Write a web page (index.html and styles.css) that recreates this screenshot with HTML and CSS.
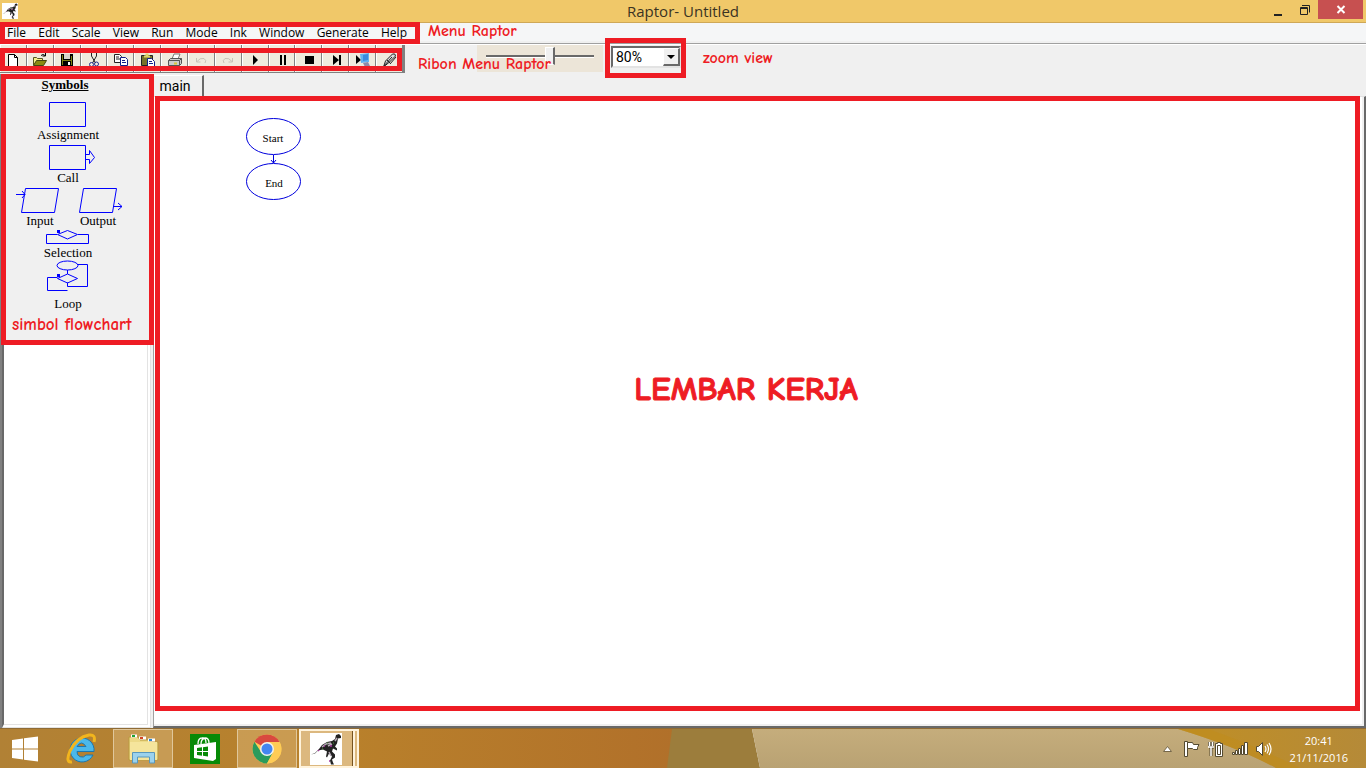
FILE: index.html
```html
<!DOCTYPE html>
<html lang="id">
<head>
    <meta charset="UTF-8">
    <meta name="viewport" content="width=device-width, initial-scale=1.0">
    <title>Raptor- Untitled</title>
    <link rel="stylesheet" href="styles.css">
</head>
<body>
    <svg class="defs" width="0" height="0" aria-hidden="true">
        <symbol id="dino" viewBox="0 0 32 32">
            <rect width="32" height="32" fill="#fff"/>
            <path d="M1 21.500l4-1.500 4-4 3-4 5-3 5-1 3-2 1-4 3-1 2 2v2l-3 .5-1 5-2 3 2 2v2l-2-1-2-1-1 3 3 3 0 3-3 2 1 3 1 2-3 0-1-4 2-4-3-3-2 4-1-1 1-5-4-2-5 1-3 3z" fill="#222"/>
            <path d="M12 14l4-3 5-1M18 13l4-2M19 19l2 4M25 8l2-3" stroke="#b5a9b5" stroke-width="1.500" fill="none"/>
            <path d="M8 18l1-1M14 13h1M21 12v2M19 28h1" stroke="#a3339a" stroke-width="1.500"/>
            <path d="M12 16h1M17 10h1M23 10h1" stroke="#4a9a3a" stroke-width="1"/>
        </symbol>
    </svg>

    <header class="titlebar">
        <svg class="app-icon" width="16" height="16"><use href="#dino"/></svg>
        <h1>Raptor- Untitled</h1>
        <div class="window-buttons">
            <button aria-label="Minimize"><svg width="10" height="12"><path d="M1 10h8v2H1z" fill="#222"/></svg></button>
            <button aria-label="Restore"><svg width="10" height="10"><path d="M.5 2.500h7v7h-7zM0 3.500h8M2 .5h7.500v7" fill="none" stroke="#222"/></svg></button>
            <button class="close" aria-label="Close"><svg width="8" height="7"><path d="M.5 0l7 7M7.500 0l-7 7" stroke="#fff" stroke-width="2"/></svg></button>
        </div>
    </header>

    <nav class="menubar">
        <div class="menu">
            <button>File</button>
            <button>Edit</button>
            <button>Scale</button>
            <button>View</button>
            <button>Run</button>
            <button>Mode</button>
            <button>Ink</button>
            <button>Window</button>
            <button>Generate</button>
            <button>Help</button>
            <span class="frame"></span>
        </div>
        <span class="note">Menu Raptor</span>
    </nav>

    <div class="toolbar">
        <div class="tools">
            <button aria-label="New"><svg width="16" height="16"><path d="M3.500 2.500h6l3 3v9h-9z" fill="#fff" stroke="#000"/><path d="M9.500 2.500v3h3" fill="none" stroke="#000"/></svg></button>
            <button aria-label="Open"><svg width="16" height="16"><path d="M1.500 13V5.500h3l1 1h5V9" fill="#f5f08a" stroke="#555520"/><path d="M1.500 13.500l3-5h10l-3 5z" fill="#8a8a10" stroke="#444410"/><path d="M9 3.500q2-2 4 0M13.500 1v3h-3" fill="none" stroke="#000"/></svg></button>
            <button aria-label="Save"><svg width="16" height="16"><path d="M2 2h12v12H2z" fill="#000"/><path d="M3 3h1v10H3zM12 4h1v9h-1zM4 8h8v1H4z" fill="#808010"/><path d="M5 2h6v5H5z" fill="#d8d4cc"/><path d="M9 10h2v3H9z" fill="#fff"/></svg></button>
            <button aria-label="Cut"><svg width="16" height="16"><path d="M5.500 1v3l4 7M10.500 1v3l-4 7" stroke="#222" fill="none"/><circle cx="5.500" cy="12.500" r="2" fill="none" stroke="#22308c"/><circle cx="10.500" cy="12" r="2" fill="none" stroke="#22308c"/></svg></button>
            <button aria-label="Copy"><svg width="16" height="16"><path d="M1.500 2.500h5l2 2v6h-7z" fill="#fff" stroke="#222"/><path d="M3 5h3M3 7h4" stroke="#222"/><path d="M7.500 5.500h5l2 2v6h-7z" fill="#fff" stroke="#10208a"/><path d="M9 8.500h3M9 10.500h4" stroke="#10208a"/></svg></button>
            <button aria-label="Paste"><svg width="16" height="16"><path d="M1.500 3.500h11v10h-11z" fill="#77732a" stroke="#222"/><path d="M4 4.500h6M5.500 2.500h3" stroke="#ddd66a" stroke-width="2"/><path d="M7.500 6.500h4l3 3v5h-7z" fill="#fff" stroke="#10208a"/><path d="M9 9.500h3M9 11.500h4" stroke="#10208a"/></svg></button>
            <button aria-label="Print"><svg width="16" height="16"><path d="M5 7l2-5h6l-2 5" fill="#fff" stroke="#777"/><path d="M1.500 8.500l2-2h11v5l-2 2h-11z" fill="#ccc" stroke="#555"/><path d="M1.500 8.500h11v5M12.500 8.500l2-2" fill="none" stroke="#555"/><path d="M7 11.500h3" stroke="#d7c73a" stroke-width="2"/></svg></button>
            <button aria-label="Undo"><svg width="16" height="16"><path d="M3.500 6v4h4M4 9.500q3-4 7-3 3 2 1 4.500" fill="none" stroke="#c8c3b8"/></svg></button>
            <button aria-label="Redo"><svg width="16" height="16"><path d="M12.500 6v4h-4M12 9.500q-3-4-7-3-3 2-1 4.500" fill="none" stroke="#c8c3b8"/></svg></button>
            <button aria-label="Run"><svg width="16" height="16"><path d="M6 3l5 5-5 5z"/></svg></button>
            <button aria-label="Pause"><svg width="16" height="16"><path d="M6 3h2v10H6zM10 3h2v10h-2z"/></svg></button>
            <button aria-label="Stop"><svg width="16" height="16"><path d="M4 4h9v8H4z"/></svg></button>
            <button aria-label="Step"><svg width="16" height="16"><path d="M5 3l6 5-6 5zM11 3h2v10h-2z"/></svg></button>
            <button aria-label="Test against server"><svg width="16" height="16"><path d="M1 3l5 5-5 4z"/><path d="M5 2l9-1v9l-8 1z" fill="#62b2f0"/><path d="M8 3l5-1v6l-5 1z" fill="#3a8ae0"/><path d="M8 11l5-1 2 4-5 1z" fill="#8d8aa8"/></svg></button>
            <button aria-label="Ink"><svg width="16" height="16"><path d="M2.500 15l2-6 7-7q3-1 3 2l-6 6z" fill="#ddd" stroke="#222"/><path d="M2 15l9-10M6 8l3 3M9 12l6-7" stroke="#222"/></svg></button>
            <span class="frame"></span>
        </div>
        <input class="speed" type="range" min="0" max="100" value="60" aria-label="Speed">
        <span class="note ribbon-note">Ribon Menu Raptor</span>
        <div class="zoom">
            <select aria-label="Zoom">
                <option>80%</option>
                <option>100%</option>
            </select>
            <span class="arrow"><svg width="8" height="4"><path d="M0 0h8L4 4z"/></svg></span>
            <span class="frame"></span>
        </div>
        <span class="note">zoom view</span>
    </div>

    <main class="workspace">
        <aside class="sidebar">
            <div class="symbols">
                <h2>Symbols</h2>
                <figure>
                    <svg width="38" height="25"><path d="M.5.5h36v24H.5z"/></svg>
                    <figcaption>Assignment</figcaption>
                </figure>
                <figure>
                    <svg width="38" height="25"><path d="M.5.5h36v24H.5zM37 9.500h3.500v-4l5 7-5 6v-4H37"/></svg>
                    <figcaption>Call</figcaption>
                </figure>
                <div class="pair">
                    <figure>
                        <svg width="38" height="25"><path d="M4.500.5h33l-4 24H.5zM-5 6.500h9M1 3l3 3.500L1 10"/></svg>
                        <figcaption>Input</figcaption>
                    </figure>
                    <figure>
                        <svg width="38" height="25"><path d="M4.500.5h33l-4 24H.5zM35 18.500h8M39 15l4 3.500-4 3.500"/></svg>
                        <figcaption>Output</figcaption>
                    </figure>
                </div>
                <figure class="selection">
                    <svg width="44" height="16"><path d="M11 5.500H.5v9h42v-9H32M11.500 5.500l10-4 10 4-10 4.500z"/><path class="dot" d="M11 1h3v3h-3z"/></svg>
                    <figcaption>Selection</figcaption>
                </figure>
                <figure class="loop">
                    <svg width="42" height="32"><ellipse cx="20.500" cy="5.500" rx="10.500" ry="4.500"/><path d="M31 4.500h9.500v22h-20v-4M20.500 10v4l10 4.500-10 4.500-10-4.500 10-4.500M10.500 17.500H.5v13h20"/><path class="dot" d="M10 14h3v3h-3z"/></svg>
                    <figcaption>Loop</figcaption>
                </figure>
                <span class="note">simbol flowchart</span>
                <span class="frame"></span>
            </div>
            <div class="watch"></div>
        </aside>

        <section class="editor">
            <div class="tabs"><button>main</button></div>
            <div class="sheet">
                <svg class="chart" width="57" height="84">
                    <ellipse cx="28.500" cy="19.500" rx="27" ry="18"/>
                    <path d="M28.500 38v8M26 43l2.500 3 2.500-3"/>
                    <ellipse cx="28.500" cy="64.500" rx="27" ry="18"/>
                    <text x="28" y="25">Start</text>
                    <text x="29" y="70">End</text>
                </svg>
                <p class="note sheet-note">LEMBAR KERJA</p>
                <span class="frame"></span>
            </div>
        </section>
    </main>

    <footer class="taskbar">
        <svg class="wallpaper" viewBox="0 0 1366 40" preserveAspectRatio="none">
            <defs>
                <linearGradient id="wood"><stop offset="0" stop-color="#b18135"/><stop offset=".5" stop-color="#b9812b"/><stop offset="1" stop-color="#b1702a"/></linearGradient>
                <linearGradient id="sand" x2="0" y2="1"><stop offset="0" stop-color="#c5ad7c"/><stop offset="1" stop-color="#b9a273"/></linearGradient>
                <linearGradient id="gold"><stop offset="0" stop-color="#c08f25"/><stop offset="1" stop-color="#b58a38"/></linearGradient>
            </defs>
            <path d="M0 0h675v40H0z" fill="url(#wood)"/>
            <path d="M672 0h80l8 40h-93z" fill="#9c7d3c"/>
            <path d="M752 0h614v40H760z" fill="url(#sand)"/>
            <path d="M1178 0h188v40h-90q-40-22-98-40z" fill="url(#gold)"/>
            <path d="M1178 0h30q50 18 92 40h-24q-40-22-98-40z" fill="#c08c1c" opacity=".6"/>
        </svg>
        <div class="apps">
            <button class="start" aria-label="Start"><svg width="28" height="26"><path d="M1 4l11-1.500V12.500H1zM13 2.300L27 .5v12H13zM1 13.500h11v10L1 22zM13 13.500h14V25.500l-14-1.800z" fill="#fff"/></svg></button>
            <button aria-label="Internet Explorer">
                <svg width="32" height="32"><path d="M29 18.500A12 12 0 1 0 28 22h-7a5 5 0 0 1-9-3.500zM12 13.500q4.500-7 9 0z" fill="#4bb8ea" stroke="#1d77ae" fill-rule="evenodd"/><path d="M7 29q-7 1-2-11Q12 4 24 2q7-1 5 7" fill="none" stroke="#f2b51d" stroke-width="3"/></svg>
            </button>
            <button class="open" aria-label="File Explorer">
                <svg width="32" height="30"><path d="M2 3h9l2 3h8l2 2h8v18H2z" fill="#edda87" stroke="#b99b3e"/><path d="M3 8h27v18H3z" fill="#f5e59c"/><path d="M4 2h6M12 4h7M21 6h7" stroke="#fff" stroke-width="3"/><path d="M5 2h3" stroke="#1ba335" stroke-width="2"/><path d="M13 4h3" stroke="#d34325" stroke-width="2"/><path d="M22 6h3" stroke="#2a8ad5" stroke-width="2"/><path d="M5.500 29V18.500h22V29h-5v-6h-12v6z" fill="#9bd2ed" stroke="#5898bd"/></svg>
            </button>
            <button aria-label="Store">
                <svg width="30" height="30"><path d="M0 0h30v30H0z" fill="#078a07"/><path d="M4 11l22-3v17l-3 2-19-3z" fill="#fff"/><path d="M8 10q0-6 4-6 4-1 4 5M11 10q0-5 4-6 4 0 4 5" fill="none" stroke="#fff" stroke-width="1.300"/><path d="M7 14l5-.7v3.700H7zM13 13.200l5-.7V17h-5zM7 18h5v3.700L7 21zM13 18h5v4.500l-5-.7z" fill="#078a07"/></svg>
            </button>
            <button class="open" aria-label="Chrome">
                <svg width="30" height="30" viewBox="0 0 30 30"><circle cx="15" cy="15" r="14.500" fill="#fc5"/><path d="M15 15L2.400 7.800A14.500 14.500 0 0 1 27.600 8z" fill="#d9493f"/><path d="M2.400 7.800A14.500 14.500 0 0 0 15 29.500l6-11-6-3.500-6 3z" fill="#2a9b5c"/><path d="M15 8h12.600q3 6 1 12-4 9-13.600 9.500l6-11z" fill="#fc5"/><circle cx="15" cy="15" r="7" fill="#f3f3ec"/><circle cx="15" cy="15" r="5.500" fill="#4486f0"/></svg>
            </button>
            <button class="active" aria-label="Raptor"><svg width="32" height="32"><use href="#dino"/></svg></button>
        </div>
        <div class="tray">
            <svg width="9" height="6"><path d="M.5 5.500l4-5 4 5z" fill="#fff" stroke="#76684a"/></svg>
            <svg width="16" height="16"><path d="M.5.500h3v15h-3z" fill="#fff" stroke="#544a31"/><path d="M3.500 1.500h5l1 2h5.500l-1.500 3 0 2h-4l-1-1h-5z" fill="#fff" stroke="#544a31"/></svg>
            <svg width="16" height="16"><path d="M7.500 2.500h2v-1h3v1h2v13h-7z" fill="#fff" stroke="#544a31"/><path d="M9.500 4.500h3v9h-3z" fill="none" stroke="#544a31"/><path d="M1.500 1v4M4.500 1v4M1 6h5M3 6v9" stroke="#544a31" stroke-width="3"/><path d="M1.500 1v4M4.500 1v4M0 6h6M3 6v9" stroke="#fff" stroke-width="1.500"/></svg>
            <svg width="16" height="14"><path d="M.5 10.500h2v2h-2zM3.500 8.500h2v4h-2zM6.500 6.500h2v6h-2zM9.500 3.500h2v9h-2zM12.500.5h3v12h-3z" fill="#fff" stroke="#544a31"/></svg>
            <svg width="16" height="14"><path d="M.5 4.500h2l4-4v13l-4-4h-2z" fill="#fff" stroke="#544a31"/><path d="M9 4q2 3 0 6M11 2.500q3 4.500 0 9M13 1q4 6 0 12" fill="none" stroke="#fff" stroke-width="1.200"/></svg>
            <div class="clock"><time>20:41</time><time>21/11/2016</time></div>
        </div>
    </footer>
</body>
</html>
```
FILE: styles.css
```css
* {
    box-sizing: border-box;
}
body {
    margin: 0;
    height: 100vh;
    display: flex;
    flex-direction: column;
    overflow: hidden;
    font-family: "Open Sans", "Noto Sans", sans-serif;
    font-size: 12px;
    color: #000;
    background-color: #f0f0f0;
}
button {
    font: inherit;
    color: inherit;
    padding: 0;
    border: none;
    background: none;
}
svg {
    display: block;
    overflow: visible;
}
.defs {
    position: absolute;
}

/* red marks over the window */
.frame {
    position: absolute;
    border: 5px solid #ee1c24;
    pointer-events: none;
    z-index: 2;
}
.note {
    font-family: "Comic Sans MS", "Comic Neue", "DejaVu Sans", sans-serif;
    font-size: 16px;
    line-height: 16px;
    font-weight: bold;
    color: #ee1c24;
    white-space: nowrap;
}

.titlebar {
    display: grid;
    grid-template-columns: 1fr auto 1fr;
    height: 23px;
    background-color: #f0c869;
    border-bottom: 1px solid #cfa857;
}
.app-icon {
    margin: 3px 2px;
}
.titlebar h1 {
    margin: 0;
    font-size: 15px;
    line-height: 23px;
    font-weight: normal;
    color: #3a3323;
}
.window-buttons {
    display: flex;
    justify-content: flex-end;
    align-items: flex-start;
    padding-right: 3px;
}
.window-buttons button {
    width: 27px;
    height: 19px;
    display: flex;
    align-items: center;
    justify-content: center;
}
.window-buttons .close {
    width: 45px;
    background-color: #c75050;
}

.menubar {
    display: flex;
    gap: 8px;
    height: 22px;
    background-color: #f5f6f7;
    border-bottom: 1px solid #fff;
    box-shadow: inset 0 -1px #a0a0a0, inset 0 -3px #f0f0f0;
}
.menu {
    position: relative;
    display: flex;
    justify-content: space-between;
    width: 420px;
    padding: 0 13px 0 7px;
}
.menu button {
    line-height: 20px;
    height: 20px;
}
.menu .frame {
    inset: -1px 0 0 0;
}

.toolbar {
    display: flex;
    align-items: flex-start;
    height: 29px;
}
.tools {
    position: relative;
    display: flex;
    width: 405px;
    height: 28px;
    border-right: 2px solid #808080;
    border-bottom: 1px solid #808080;
    background-color: #efebde;
}
.tools button {
    flex: 1;
    display: flex;
    align-items: center;
    justify-content: center;
    padding-top: 3px;
    border-left: 1px solid #fff;
    border-right: 1px solid #808080;
}
.tools .frame {
    inset: 3px 1px 1px 0;
}
.speed {
    appearance: none;
    width: 126px;
    height: 27px;
    margin: 0 0 0 72px;
    padding: 0 9px;
    background-color: #ece5d8;
}
.speed::-webkit-slider-runnable-track {
    height: 3px;
    margin-bottom: 4px;
    border-top: 2px solid #696969;
    border-bottom: 1px solid #fff;
}
.speed::-webkit-slider-thumb {
    appearance: none;
    width: 10px;
    height: 18px;
    margin-top: -10px;
    background-color: #f0f0f0;
    border: 1px solid #fff;
    border-right: 2px solid #696969;
}
.ribbon-note {
    width: 138px;
    margin: 11px 0 0 -185px;
    position: relative;
}
.zoom {
    position: relative;
    width: 70px;
    height: 22px;
    margin: 1px 22px 0 55px;
}
.zoom select {
    appearance: none;
    width: 100%;
    height: 22px;
    padding: 0 3px;
    font-family: Roboto, "Open Sans", sans-serif;
    font-size: 14px;
    border: 2px solid;
    border-color: #696969 #e3e3e3 #e3e3e3 #696969;
    border-radius: 0;
    background-color: #fff;
}
.arrow {
    position: absolute;
    top: 2px;
    right: 1px;
    width: 17px;
    height: 18px;
    display: flex;
    align-items: center;
    justify-content: center;
    background-color: #f0f0f0;
    border: 1px solid #fff;
    border-right: 2px solid #696969;
    border-bottom: 2px solid #696969;
    pointer-events: none;
}
.zoom .frame {
    inset: -8px -5px -10px -6px;
}
.zoom + .note {
    margin-top: 5px;
}

.workspace {
    flex: 1;
    display: flex;
    min-height: 0;
}
.sidebar {
    display: flex;
    flex-direction: column;
    width: 153px;
    border-left: 2px solid #808080;
}
.symbols {
    position: relative;
    display: flex;
    flex-direction: column;
    align-items: center;
    height: 270px;
    padding: 2px 27px 0 8px;
    font-family: "Liberation Serif", serif;
    font-size: 13px;
    line-height: 15px;
}
.symbols h2 {
    margin: 0 0 9px;
    padding-right: 6px;
    font-size: 13px;
    line-height: 17px;
    text-decoration: underline;
}
.symbols figure {
    display: flex;
    flex-direction: column;
    align-items: center;
    margin: 0 0 3px;
}
.symbols svg {
    fill: none;
    stroke: #00f;
}
.symbols .dot {
    fill: #00f;
    stroke: none;
}
.pair {
    display: grid;
    grid-template-columns: 58px 58px;
    margin: 0 0 1px 2px;
}
.pair figure,
.symbols .pair figure,
.symbols .selection {
    margin: 0;
}
.symbols .loop {
    gap: 4px;
}
.symbols .note {
    align-self: flex-start;
    margin: 3px 0 0 2px;
    font-size: 17px;
}
.symbols .frame {
    inset: 0 -1px -1px -1px;
}
.watch {
    flex: 1;
    margin-right: 2px;
    background-color: #fff;
    border-left: 2px solid #696969;
    border-right: 4px double #e3e3e3;
    border-bottom: 4px double #e3e3e3;
}
.editor {
    flex: 1;
    display: flex;
    flex-direction: column;
}
.tabs {
    height: 22px;
    padding-top: 1px;
}
.tabs button {
    width: 51px;
    height: 21px;
    padding-right: 5px;
    font-family: Roboto, "Open Sans", sans-serif;
    font-size: 14px;
    border-top: 1px solid #fff;
    border-right: 2px solid #696969;
}
.sheet {
    flex: 1;
    position: relative;
    display: flex;
    background-color: #fff;
    border: 1px solid #a0a0a0;
    border-top-color: #e3e3e3;
    border-right: 2px solid #696969;
    border-bottom: 2px solid #696969;
    box-shadow: inset -2px -2px #f0f0f0;
}
.chart {
    position: absolute;
    left: 91px;
    top: 20px;
    fill: none;
    stroke: #00d;
}
.chart text {
    font-family: "Liberation Serif", serif;
    font-size: 11px;
    text-anchor: middle;
    fill: #000;
    stroke: none;
}
.sheet-note {
    margin: auto;
    padding: 0 26px 46px 0;
    font-size: 33px;
    line-height: 40px;
    -webkit-text-stroke: 1px #ee1c24;
}
.sheet .frame {
    inset: -1px 4px 15px 1px;
}

.taskbar {
    position: relative;
    display: flex;
    justify-content: space-between;
    height: 40px;
    border-top: 1px solid #8f6b35;
    color: #fff;
}
.wallpaper {
    position: absolute;
    inset: 0;
    width: 100%;
    height: 100%;
    z-index: -1;
}
.apps {
    display: flex;
    gap: 2px;
}
.apps button {
    display: flex;
    align-items: center;
    justify-content: center;
    width: 60px;
    height: 39px;
}
.apps .start {
    width: 49px;
}
.apps .open {
    border: 1px solid #e0c79b;
    background-color: rgba(255, 235, 190, 0.25);
}
.apps .active {
    padding-right: 6px;
    border: 2px solid #fff3dc;
    background: linear-gradient(90deg, transparent 51px, #76531f 51px, #76531f 52px, #fff3dc 52px, #fff3dc 54px, transparent 54px), rgba(255, 240, 210, 0.5);
}
.tray {
    display: flex;
    align-items: center;
    gap: 8px;
    padding-right: 18px;
}
.tray > svg:first-child {
    margin-right: 4px;
}
.clock {
    display: flex;
    flex-direction: column;
    align-items: center;
    margin-left: 10px;
    font-size: 11px;
    line-height: 17px;
}
```
